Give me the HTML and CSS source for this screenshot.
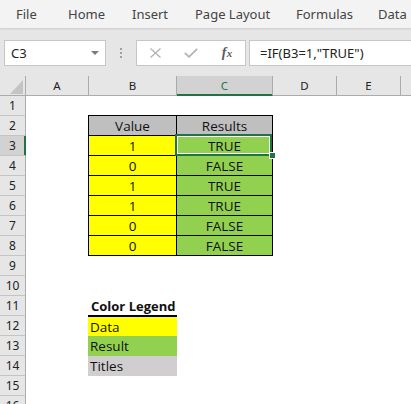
FILE: index.html
```html
<!DOCTYPE html>
<html lang="en">
<head>
<meta charset="utf-8">
<title>Excel IF</title>
<link rel="stylesheet" href="styles.css">
</head>
<body>
<div class="app">
  <nav class="ribbon">
    <span class="tab">File</span>
    <span class="tab">Home</span>
    <span class="tab">Insert</span>
    <span class="tab">Page Layout</span>
    <span class="tab">Formulas</span>
    <span class="tab">Data</span>
  </nav>

  <div class="fbar">
    <div class="namebox"><span>C3</span><span class="caret"></span></div>
    <div class="grip"><i></i><i></i><i></i></div>
    <div class="fbtns">
      <span class="slot">
        <svg width="11" height="10" viewBox="0 0 11 10"><path d="M0.5 0.5 L10.5 9.5 M10.5 0.5 L0.5 9.5" stroke="#b3b3b3" stroke-width="1.3" fill="none"/></svg>
      </span>
      <span class="slot">
        <svg width="14" height="10" viewBox="0 0 14 10"><path d="M0.8 4.8 L5 8.8 L13.2 0.8" stroke="#b3b3b3" stroke-width="1.8" fill="none"/></svg>
      </span>
      <span class="slot fx">f<span class="fx-x">x</span></span>
    </div>
    <div class="finput">=IF(B3=1,"TRUE")</div>
  </div>

  <div class="colheads">
    <div class="ch corner"><svg width="13" height="14" viewBox="0 0 13 14"><polygon points="13,0 13,14 0,14" fill="#c4c4c4"/></svg></div>
    <div class="ch col-a">A</div>
    <div class="ch col-b">B</div>
    <div class="ch col-c sel">C</div>
    <div class="ch col-d">D</div>
    <div class="ch col-e">E</div>
    <div class="ch col-f"></div>
  </div>

  <div class="body">
    <div class="rowheads">
      <div class="rh">1</div>
      <div class="rh">2</div>
      <div class="rh sel">3</div>
      <div class="rh">4</div>
      <div class="rh">5</div>
      <div class="rh">6</div>
      <div class="rh">7</div>
      <div class="rh">8</div>
      <div class="rh">9</div>
      <div class="rh">10</div>
      <div class="rh">11</div>
      <div class="rh">12</div>
      <div class="rh">13</div>
      <div class="rh">14</div>
      <div class="rh">15</div>
      <div class="rh">16</div>
    </div>

    <div class="cells">
      <div class="tbl">
        <div class="c title">Value</div>
        <div class="c title">Results</div>
        <div class="c data">1</div>
        <div class="c result active">TRUE<span class="selbox"><span class="handle"></span></span></div>
        <div class="c data">0</div>
        <div class="c result">FALSE</div>
        <div class="c data">1</div>
        <div class="c result">TRUE</div>
        <div class="c data">1</div>
        <div class="c result">TRUE</div>
        <div class="c data">0</div>
        <div class="c result">FALSE</div>
        <div class="c data">0</div>
        <div class="c result">FALSE</div>
      </div>

      <div class="legend">
        <div class="lg-head">Color Legend</div>
        <div class="lg-item data">Data</div>
        <div class="lg-item result">Result</div>
        <div class="lg-item titles">Titles</div>
      </div>
    </div>
  </div>
</div>
</body>
</html>
```

FILE: styles.css
```css
html, body {
  margin: 0;
  padding: 0;
}

body {
  width: 411px;
  height: 404px;
  overflow: hidden;
  background: #ffffff;
  font-family: "Noto Sans", "Open Sans", sans-serif;
}

.app {
  width: 411px;
  height: 404px;
  overflow: hidden;
}

/* Ribbon tabs */
.ribbon {
  position: relative;
  z-index: 2;
  height: 28px;
  background: #f3f3f3;
  box-shadow: 0 1px 2px rgba(0, 0, 0, 0.13);
  display: grid;
  grid-template-columns: 52px 64px 63px 101px 82px auto;
  padding-left: 16px;
  font-size: 13px;
  line-height: 28px;
  color: #444444;
  white-space: nowrap;
}

/* Formula bar */
.fbar {
  height: 48px;
  box-sizing: border-box;
  padding-top: 12px;
  background: #e6e6e6;
  display: flex;
  align-items: flex-start;
}

.namebox {
  margin-left: 4px;
  width: 102px;
  height: 26px;
  box-sizing: border-box;
  background: #ffffff;
  border: 1px solid #c6c6c6;
  display: flex;
  align-items: center;
  justify-content: space-between;
  padding: 0 6px 0 6px;
  font-size: 13px;
  color: #222222;
}

.caret {
  width: 0;
  height: 0;
  border-left: 4px solid transparent;
  border-right: 4px solid transparent;
  border-top: 4px solid #7a7a7a;
}

.grip {
  width: 30px;
  padding-top: 8px;
  display: flex;
  flex-direction: column;
  align-items: center;
  gap: 2px;
}

.grip i {
  display: block;
  width: 2px;
  height: 2px;
  background: #a0a0a0;
}

.fbtns {
  width: 110px;
  height: 26px;
  box-sizing: border-box;
  background: #ffffff;
  border: 1px solid #c6c6c6;
  display: flex;
  align-items: center;
}

.slot {
  width: 36px;
  display: flex;
  justify-content: center;
  align-items: center;
}

.fx {
  font-family: "Liberation Serif", "DejaVu Serif", serif;
  font-style: italic;
  font-weight: bold;
  font-size: 14px;
  color: #5a5a5a;
  line-height: 24px;
}

.fx-x {
  font-size: 11px;
  margin-left: 0.5px;
}

.finput {
  margin-left: 3px;
  flex: 1;
  height: 26px;
  box-sizing: border-box;
  background: #ffffff;
  border: 1px solid #c6c6c6;
  border-right: none;
  padding-left: 10px;
  font-size: 13px;
  line-height: 24px;
  color: #222222;
  white-space: nowrap;
}

/* Column headers */
.colheads {
  display: flex;
  height: 20px;
  background: #e6e6e6;
}

.ch {
  flex: none;
  height: 20px;
  box-sizing: border-box;
  border-right: 1px solid #ababab;
  border-bottom: 1px solid #ababab;
  text-align: center;
  font-size: 11.5px;
  line-height: 20px;
  color: #222222;
}

.corner {
  width: 26px;
  display: flex;
  justify-content: flex-end;
  align-items: flex-end;
  padding: 0 2px 1px 0;
}

.corner svg {
  display: block;
}

.col-a { width: 63px; }
.col-b { width: 88px; }
.col-c { width: 96px; }
.col-d { width: 64px; }
.col-e { width: 64px; }
.col-f { flex: 1; border-right: none; }

.ch.sel {
  background: #d2d2d2;
  color: #217346;
  border-bottom-color: #217346;
  box-shadow: inset 0 -1px 0 #217346;
}

/* Body */
.body {
  display: flex;
}

.rowheads {
  width: 26px;
  flex: none;
  background: #e6e6e6;
}

.rh {
  height: 20px;
  box-sizing: border-box;
  border-right: 1px solid #ababab;
  border-bottom: 1px solid #c4c4c4;
  text-align: center;
  font-size: 12px;
  line-height: 20px;
  color: #222222;
}

.rh.sel {
  background: #d2d2d2;
  border-right-color: #217346;
  box-shadow: inset -1px 0 0 #217346;
}

.cells {
  flex: 1;
  display: grid;
  grid-template-columns: 63px 88px 96px 64px 64px 1fr;
  grid-template-rows: repeat(16, 20px);
  font-family: "Open Sans", "Noto Sans", sans-serif;
  font-size: 13.5px;
  color: #111111;
}

/* Data table */
.tbl {
  grid-column: 2 / 4;
  grid-row: 2 / 9;
  margin: -1px 0 0 -1px;
  box-sizing: border-box;
  border-left: 1px solid #000000;
  border-top: 1px solid #000000;
  display: grid;
  grid-template-columns: 88px 96px;
  grid-template-rows: repeat(7, 20px);
}

.c {
  box-sizing: border-box;
  border-right: 1px solid #000000;
  border-bottom: 1px solid #000000;
  text-align: center;
  line-height: 20px;
}

.c.title { background: #bfbfbf; }
.c.data { background: #ffff00; }
.c.result { background: #92d050; }

.c.active {
  position: relative;
}

.selbox {
  position: absolute;
  left: -2px;
  top: -2px;
  width: 97px;
  height: 22px;
  box-sizing: border-box;
  border: 2px solid #217346;
  box-shadow: inset 0 0 0 1px #ffffff;
}

.handle {
  position: absolute;
  left: 92px;
  top: 16px;
  width: 7px;
  height: 7px;
  box-sizing: border-box;
  background: #217346;
  border: 1px solid #ffffff;
}

/* Legend */
.legend {
  grid-column: 2;
  grid-row: 11 / 15;
  margin-left: -1px;
  display: flex;
  flex-direction: column;
}

.lg-head {
  height: 21px;
  box-sizing: border-box;
  border-bottom: 2px solid #000000;
  padding-left: 3px;
  font-weight: bold;
  font-size: 13px;
  line-height: 20px;
}

.lg-item {
  height: 20px;
  box-sizing: border-box;
  padding: 1px 0 0 2px;
  line-height: 19px;
}

.lg-item.data { height: 19px; background: #ffff00; }
.lg-item.result { background: #92d050; }
.lg-item.titles { background: #d0cece; }
```
